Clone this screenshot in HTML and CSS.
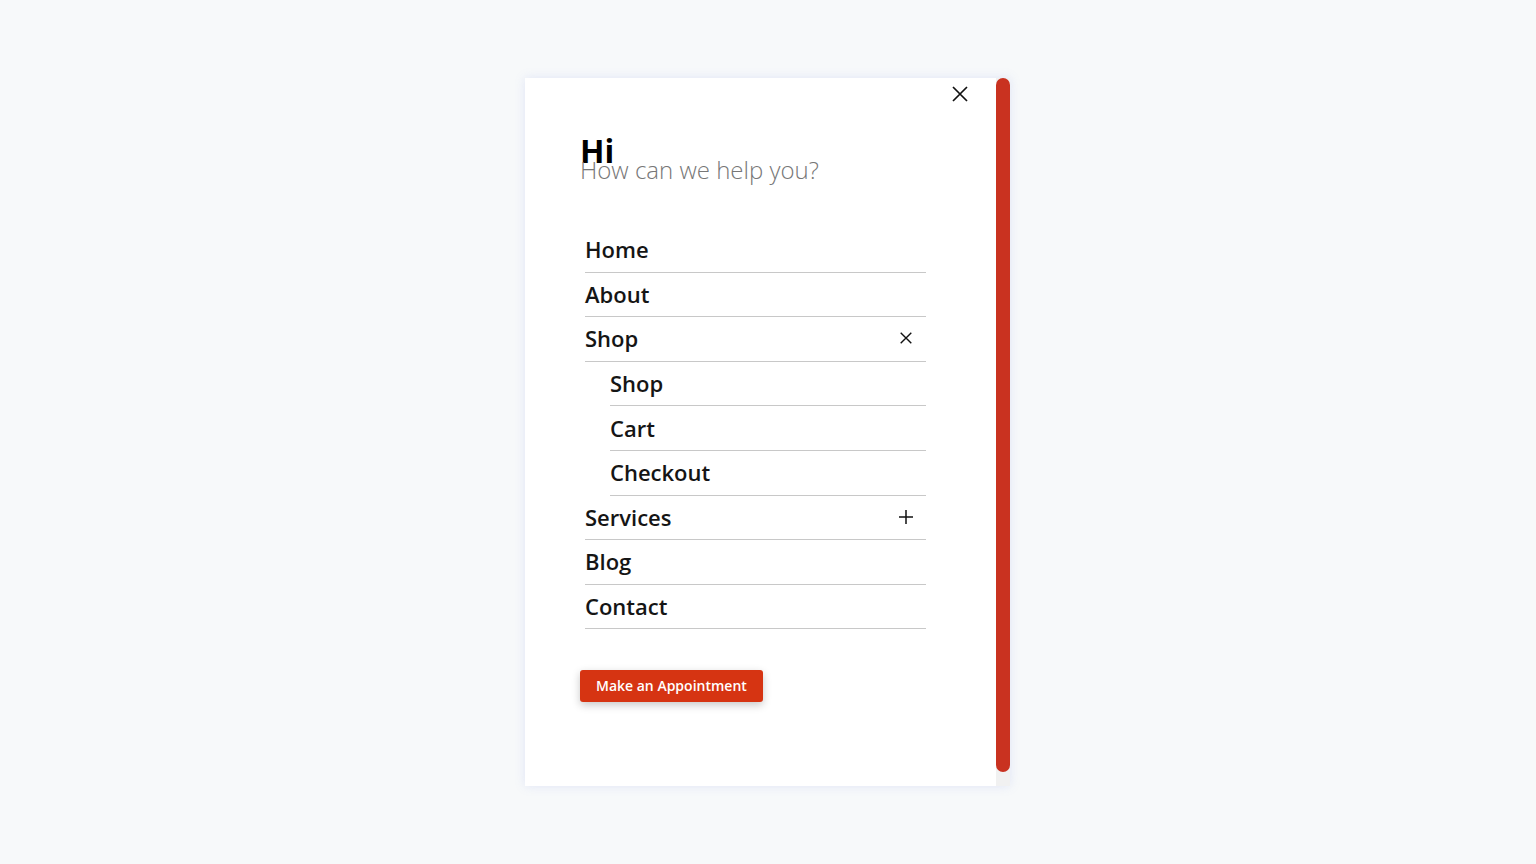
FILE: index.html
```html
<!DOCTYPE html>
<html lang="en">
<head>
<meta charset="utf-8">
<title>Menu</title>
<link rel="stylesheet" href="styles.css">
</head>
<body>
<div class="panel">
  <div class="content">
    <div class="head">
      <button class="close" aria-label="Close">
        <svg width="16" height="16" viewBox="0 0 16 16"><path d="M1 1 L15 15 M15 1 L1 15" stroke="#111" stroke-width="1.7" fill="none"/></svg>
      </button>
    </div>
    <h3 class="hi">Hi</h3>
    <p class="sub">How can we help you?</p>
    <ul class="menu">
      <li class="item"><span>Home</span></li>
      <li class="item"><span>About</span></li>
      <li class="item"><span>Shop</span>
        <span class="toggle"><svg width="12" height="12" viewBox="0 0 12 12"><path d="M0.7 0.7 L11.3 11.3 M11.3 0.7 L0.7 11.3" stroke="#111" stroke-width="1.4" fill="none"/></svg></span>
      </li>
      <li class="subwrap">
        <ul class="submenu">
          <li class="item"><span>Shop</span></li>
          <li class="item"><span>Cart</span></li>
          <li class="item"><span>Checkout</span></li>
        </ul>
      </li>
      <li class="item"><span>Services</span>
        <span class="toggle"><svg width="14" height="14" viewBox="0 0 14 14"><path d="M7 0 V14 M0 7 H14" stroke="#111" stroke-width="1.5" fill="none"/></svg></span>
      </li>
      <li class="item"><span>Blog</span></li>
      <li class="item"><span>Contact</span></li>
    </ul>
    <div class="cta-row">
      <a class="cta" href="#">Make an Appointment</a>
    </div>
  </div>
  <div class="scrollbar"><div class="thumb"></div></div>
</div>
</body>
</html>
```
FILE: styles.css
```css
* { box-sizing: border-box; }
html, body { margin: 0; padding: 0; }
body {
  background: #f7f9fa;
  font-family: "Open Sans", "Noto Sans", sans-serif;
  min-height: 100vh;
  display: flex;
  align-items: center;
  justify-content: center;
}
.panel {
  width: 485px;
  height: 708px;
  background: #fff;
  display: flex;
  box-shadow: 0 0 10px rgba(120, 140, 230, 0.18);
  margin-left: -1px;
}
.content {
  flex: 1;
  padding: 0 0 0 55px;
}
.head {
  display: flex;
  justify-content: flex-end;
  padding-top: 8px;
  padding-right: 28px;
}
.close {
  border: 0;
  background: none;
  padding: 0;
  width: 16px;
  height: 16px;
  display: block;
  cursor: pointer;
}
.close svg { display: block; }
.hi {
  margin: 41px 0 0 0;
  font-size: 32px;
  font-weight: 700;
  line-height: 16px;
  color: #000;
}
.sub {
  margin: 0;
  font-size: 24px;
  font-weight: 300;
  line-height: 22px;
  color: #777;
}
.menu {
  list-style: none;
  margin: 47px 0 0 5px;
  padding: 0;
  width: 341px;
}
.submenu {
  list-style: none;
  margin: 0 0 0 25px;
  padding: 0;
}
.item {
  display: flex;
  align-items: center;
  justify-content: space-between;
  height: 44.6px;
  border-bottom: 1px solid #c8c8c8;
  font-size: 22px;
  font-weight: 600;
  color: #151515;
  padding-bottom: 1px;
}
.subwrap { display: block; }
.toggle {
  width: 40px;
  display: flex;
  justify-content: center;
  align-items: center;
}
.toggle svg { display: block; }
.cta-row {
  margin-top: 41px;
  display: flex;
}
.cta {
  display: inline-block;
  height: 32px;
  line-height: 32px;
  padding: 0 16px 0 16px;
  background: #d63412;
  color: #fff;
  font-size: 14px;
  font-weight: 600;
  text-decoration: none;
  border-radius: 3px;
  box-shadow: 0 3px 8px rgba(0, 0, 0, 0.22);
}
.scrollbar {
  width: 14px;
  background: #f1f1f1;
  display: flex;
  flex-direction: column;
}
.thumb {
  height: 694px;
  background: #c93220;
  border-radius: 7px;
}
```
